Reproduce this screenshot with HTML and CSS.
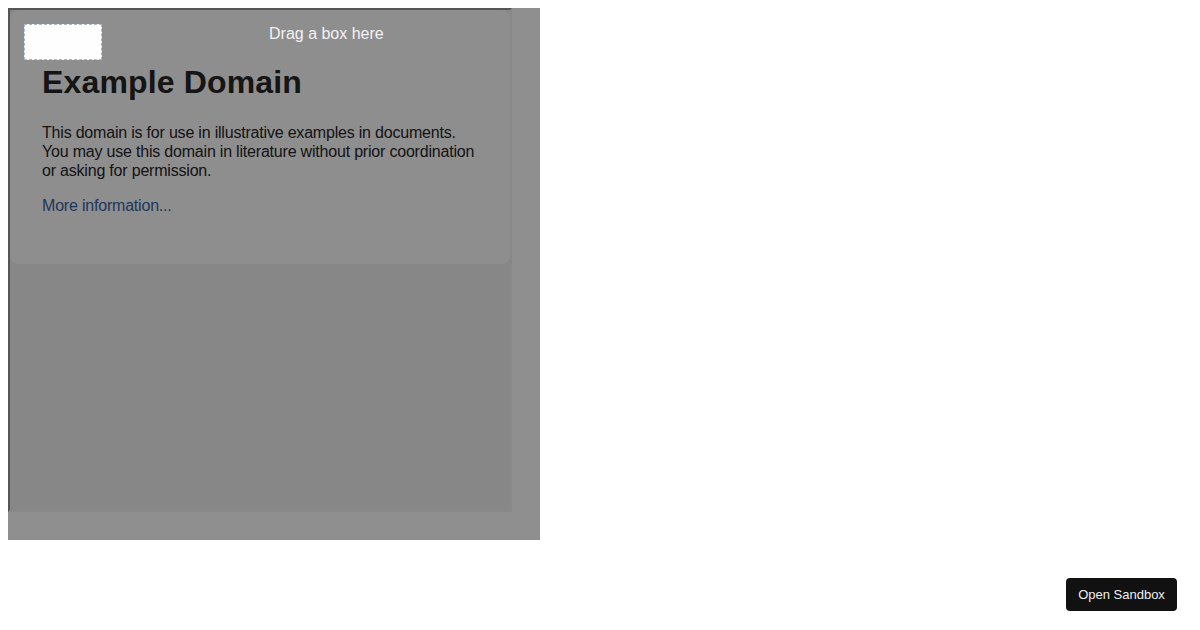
FILE: index.html
```html
<!DOCTYPE html>
<html>
<head>
<meta charset="utf-8">
<link rel="stylesheet" href="styles.css">
</head>
<body>
<div class="stage">
  <div class="frame">
    <div class="card">
      <h1>Example Domain</h1>
      <p>This domain is for use in illustrative examples in documents. You may use this domain in literature without prior coordination or asking for permission.</p>
      <p class="more"><a href="#">More information...</a></p>
    </div>
  </div>
  <div class="overlay">
    <div class="drag-box"></div>
    <div class="drag-label">Drag a box here</div>
  </div>
</div>
<button class="sandbox-btn">Open Sandbox</button>
</body>
</html>
```

FILE: styles.css
```css
html, body {
  margin: 0;
  padding: 0;
  background: #ffffff;
}
body {
  padding: 8px;
  font-family: "Liberation Sans", Arial, sans-serif;
}
.stage {
  position: relative;
  width: 532px;
  height: 532px;
  background: #ffffff;
}
.frame {
  width: 500px;
  height: 500px;
  border-style: solid;
  border-width: 2px;
  border-color: #9a9a9a #f2f2f2 #f2f2f2 #9a9a9a;
  background: #f0f0f2;
  overflow: hidden;
}
.card {
  padding: 32px;
  background: #fdfdff;
  border-radius: 8px;
  color: #262626;
  font-size: 16px;
}
.card h1 {
  font-size: 32px;
  line-height: 38.5px;
  font-weight: bold;
  letter-spacing: 0.15px;
  margin: 21.44px 0;
}
.card p {
  margin: 16px 0;
  line-height: 19px;
  letter-spacing: -0.2px;
}
.card p.more {
  line-height: 20px;
}
.card a {
  color: #3b62a1;
  text-decoration: none;
}
.overlay {
  position: absolute;
  inset: 0;
  background: rgba(0, 0, 0, 0.44);
  display: flex;
  align-items: flex-start;
  padding: 16px;
  box-sizing: border-box;
}
.drag-box {
  width: 76px;
  height: 34px;
  background: #fefefe;
  border: 1px dashed #a8b8c4;
  flex: none;
}
.drag-label {
  margin-left: 167px;
  color: #f2f2f2;
  font-size: 16px;
  line-height: 18px;
  margin-top: 1px;
}
.sandbox-btn {
  position: fixed;
  right: 23px;
  bottom: 19px;
  width: 111px;
  height: 33px;
  background: #111111;
  color: #eeeeee;
  border: none;
  border-radius: 4px;
  font-family: "Liberation Sans", Arial, sans-serif;
  font-size: 13px;
  padding: 0;
}
```
